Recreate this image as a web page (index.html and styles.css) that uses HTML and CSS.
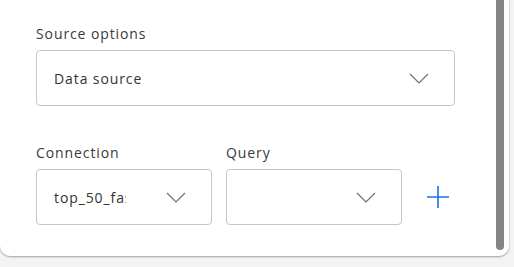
FILE: index.html
```html
<!DOCTYPE html>
<html>
<head>
<meta charset="utf-8">
<link rel="stylesheet" href="styles.css">
</head>
<body>
<div class="card">
  <div class="field">
    <div class="label">Source options</div>
    <div class="select select-wide">
      <span class="value">Data source</span>
      <svg class="chev" width="20" height="11" viewBox="0 0 20 11"><path d="M1 1 L10 10 L19 1" fill="none" stroke="#707070" stroke-width="1.2"/></svg>
    </div>
  </div>
  <div class="row">
    <div class="field">
      <div class="label">Connection</div>
      <div class="select select-small">
        <span class="value clip">top_50_fashion</span>
        <svg class="chev" width="20" height="11" viewBox="0 0 20 11"><path d="M1 1 L10 10 L19 1" fill="none" stroke="#707070" stroke-width="1.2"/></svg>
      </div>
    </div>
    <div class="field">
      <div class="label">Query</div>
      <div class="select select-small">
        <span class="value"></span>
        <svg class="chev" width="20" height="11" viewBox="0 0 20 11"><path d="M1 1 L10 10 L19 1" fill="none" stroke="#707070" stroke-width="1.2"/></svg>
      </div>
    </div>
    <svg class="plus" width="24" height="24" viewBox="0 0 24 24"><path d="M12 1 V23 M1 12 H23" stroke="#1a73e8" stroke-width="1.6" fill="none"/></svg>
  </div>
  <div class="scrollbar"></div>
</div>
</body>
</html>
```
FILE: styles.css
```css
html, body {
  margin: 0;
  padding: 0;
}
body {
  background: #f3f3f3;
  font-family: "Open Sans", "Noto Sans", sans-serif;
  width: 514px;
  height: 267px;
  overflow: hidden;
}
.card {
  position: relative;
  box-sizing: border-box;
  width: 509px;
  height: 256px;
  background: #fff;
  border-radius: 0 0 10px 10px;
  box-shadow: 0 1px 2px rgba(0,0,0,0.35);
  padding: 24px 0 0 36px;
  display: flex;
  flex-direction: column;
  gap: 37px;
}
.field {
  display: flex;
  flex-direction: column;
  gap: 7px;
}
.label {
  font-size: 14px;
  line-height: 19px;
  letter-spacing: 0.9px;
  color: #3a3a3a;
}
.select {
  box-sizing: border-box;
  height: 56px;
  border: 1px solid #c6c6c6;
  border-radius: 4px;
  display: flex;
  align-items: center;
  justify-content: space-between;
  padding: 0 25px 0 17px;
}
.select-wide {
  width: 419px;
}
.select-small {
  width: 176px;
}
.value {
  font-size: 14px;
  letter-spacing: 0.9px;
  color: #333;
}
.clip {
  width: 72px;
  overflow: hidden;
  white-space: nowrap;
}
.row {
  display: flex;
  align-items: flex-end;
  gap: 14px;
}
.plus {
  margin: 0 0 16px 10px;
}
.chev {
  display: block;
}
.scrollbar {
  position: absolute;
  right: 5px;
  top: 0;
  width: 8px;
  height: 250px;
  background: #858585;
  border-radius: 0 0 4px 4px;
}
```
